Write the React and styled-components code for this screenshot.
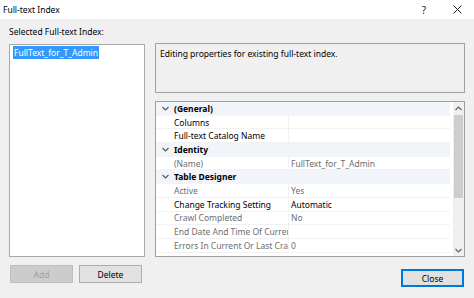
import styled, { createGlobalStyle } from "styled-components";

const Global = createGlobalStyle`
  html, body {
    margin: 0;
    padding: 0;
    background: #f0f0f0;
  }
  body {
    font-family: "Noto Sans", "Open Sans", sans-serif;
    font-size: 8.5px;
    color: #000;
  }
`;

const Window = styled.div`
  width: 474px;
  height: 298px;
  display: flex;
  flex-direction: column;
  background: #f0f0f0;
  overflow: hidden;
`;

const TitleBar = styled.div`
  height: 19px;
  background: #fff;
  display: flex;
  align-items: center;
  padding-left: 3px;
`;

const Title = styled.div`
  flex: 1;
  line-height: 19px;
`;

const TitleBtn = styled.div`
  width: ${(p) => p.$w}px;
  display: flex;
  justify-content: center;
  align-items: center;
  font-size: 10px;
  color: #222;
`;

const Body = styled.div`
  flex: 1;
  display: grid;
  grid-template-columns: 136px 310px;
  column-gap: 10px;
  padding: 6px 0 0 9px;
`;

const LeftCol = styled.div`
  display: flex;
  flex-direction: column;
`;

const RightCol = styled.div`
  display: flex;
  flex-direction: column;
  padding-top: 18px;
`;

const Label = styled.div`
  line-height: 14px;
  margin-bottom: 5px;
`;

const ListBox = styled.div`
  height: 213px;
  box-sizing: border-box;
  border: 1px solid #a9a9a9;
  background: #fff;
  padding: 1px 3px;
`;

const ListItem = styled.span`
  display: inline-block;
  background: ${(p) => (p.$selected ? "#3399ff" : "transparent")};
  color: ${(p) => (p.$selected ? "#fff" : "#000")};
  padding: 0 1px;
  line-height: 13px;
`;

const ButtonRow = styled.div`
  display: flex;
  gap: 6px;
  margin-top: 8px;
  padding-left: 1px;
`;

const Button = styled.button`
  width: 63px;
  height: 18px;
  box-sizing: border-box;
  font-family: inherit;
  font-size: 8.5px;
  padding: 0;
  background: ${(p) => (p.disabled ? "#cccccc" : "#e1e1e1")};
  color: ${(p) => (p.disabled ? "#a0a0a0" : "#000")};
  border: ${(p) =>
    p.$default ? "2px solid #0078d7" : p.disabled ? "1px solid #bfbfbf" : "1px solid #adadad"};
`;

const Description = styled.div`
  height: 50px;
  box-sizing: border-box;
  border: 1px solid #a0a0a0;
  background: #f0f0f0;
  padding: 3px 4px;
  line-height: 13px;
`;

const PropGrid = styled.div`
  margin-top: 8px;
  height: 156px;
  box-sizing: border-box;
  border: 1px solid #a0a0a0;
  background: #fff;
  display: flex;
`;

const Rows = styled.div`
  flex: 1;
  margin-right: 3px;
  overflow: hidden;
`;

const Row = styled.div`
  height: 13.7px;
  display: grid;
  grid-template-columns: 18px 114px 1fr;
  align-items: center;
  background: ${(p) => (p.$cat ? "#f1f4f9" : "#fff")};
  border-bottom: 1px solid ${(p) => (p.$cat ? "#f1f4f9" : "#f2f2f2")};
  box-sizing: border-box;
  color: ${(p) => (p.$muted ? "#6d6d6d" : "#000")};
  font-weight: ${(p) => (p.$cat ? 700 : 400)};
`;

const Chevron = styled.div`
  display: flex;
  justify-content: center;
  align-items: center;
`;

const Cell = styled.div`
  white-space: nowrap;
  overflow: hidden;
  padding-left: ${(p) => (p.$value ? "2px" : "0")};
  border-left: ${(p) => (p.$value ? "1px solid #f2f2f2" : "none")};
  height: 100%;
  display: flex;
  align-items: center;
`;

const CatCell = styled.div`
  grid-column: 2 / 4;
  white-space: nowrap;
`;

const ScrollBar = styled.div`
  width: 11px;
  background: #f0f0f0;
  display: flex;
  flex-direction: column;
  align-items: center;
`;

const ScrollArrow = styled.div`
  height: 12px;
  display: flex;
  align-items: center;
  justify-content: center;
`;

const Thumb = styled.div`
  width: 9px;
  height: 83px;
  margin-top: 1px;
  background: #cdcdcd;
`;

const Track = styled.div`
  flex: 1;
`;

const Footer = styled.div`
  display: flex;
  justify-content: flex-end;
  margin-top: 12px;
  margin-right: 1px;
`;

const Chev = ({ up, color = "#555" }) => (
  <svg width="7" height="5" viewBox="0 0 7 5">
    <polyline
      points={up ? "0.5,4 3.5,1 6.5,4" : "0.5,1 3.5,4 6.5,1"}
      fill="none"
      stroke={color}
      strokeWidth="1.1"
    />
  </svg>
);

const rows = [
  { cat: true, label: "(General)" },
  { label: "Columns", value: "" },
  { label: "Full-text Catalog Name", value: "" },
  { cat: true, label: "Identity" },
  { label: "(Name)", value: "FullText_for_T_Admin", muted: true },
  { cat: true, label: "Table Designer" },
  { label: "Active", value: "Yes", muted: true },
  { label: "Change Tracking Setting", value: "Automatic" },
  { label: "Crawl Completed", value: "No", muted: true },
  { label: "End Date And Time Of Current Crawl", value: "", muted: true },
  { label: "Errors In Current Or Last Crawl", value: "0", muted: true },
];

export default function App() {
  return (
    <>
      <Global />
      <Window>
        <TitleBar>
          <Title>Full-text Index</Title>
          <TitleBtn $w={32}>?</TitleBtn>
          <TitleBtn $w={34}>
            <svg width="9" height="9" viewBox="0 0 9 9">
              <path d="M0.5 0.5 L8.5 8.5 M8.5 0.5 L0.5 8.5" stroke="#222" strokeWidth="1" />
            </svg>
          </TitleBtn>
        </TitleBar>
        <Body>
          <LeftCol>
            <Label>Selected Full-text Index:</Label>
            <ListBox>
              <ListItem $selected>FullText_for_T_Admin</ListItem>
            </ListBox>
            <ButtonRow>
              <Button disabled>Add</Button>
              <Button>Delete</Button>
            </ButtonRow>
          </LeftCol>
          <RightCol>
            <Description>Editing properties for existing full-text index.</Description>
            <PropGrid>
              <Rows>
                {rows.map((r) =>
                  r.cat ? (
                    <Row key={r.label} $cat>
                      <Chevron>
                        <Chev />
                      </Chevron>
                      <CatCell>{r.label}</CatCell>
                    </Row>
                  ) : (
                    <Row key={r.label} $muted={r.muted}>
                      <span />
                      <Cell>{r.label}</Cell>
                      <Cell $value>{r.value}</Cell>
                    </Row>
                  )
                )}
              </Rows>
              <ScrollBar>
                <ScrollArrow>
                  <Chev up color="#606060" />
                </ScrollArrow>
                <Thumb />
                <Track />
                <ScrollArrow>
                  <Chev color="#606060" />
                </ScrollArrow>
              </ScrollBar>
            </PropGrid>
            <Footer>
              <Button $default>Close</Button>
            </Footer>
          </RightCol>
        </Body>
      </Window>
    </>
  );
}
